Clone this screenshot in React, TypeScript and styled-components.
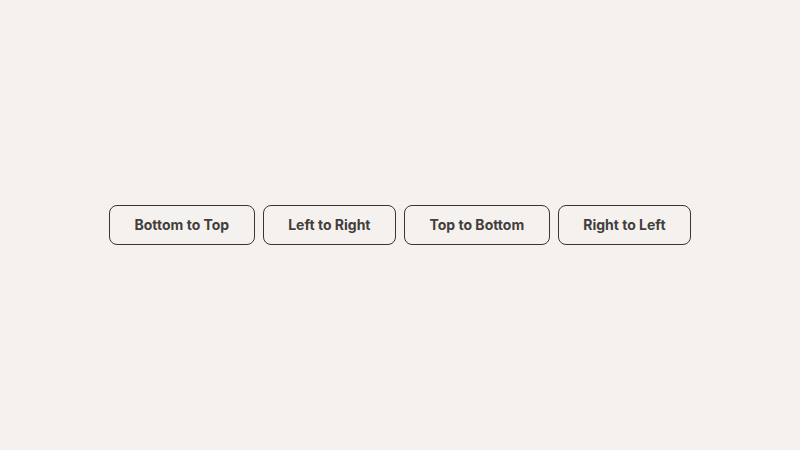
import styled, { createGlobalStyle } from "styled-components";

const GlobalStyle = createGlobalStyle`
  html, body {
    margin: 0;
    padding: 0;
    background: #f5f1ee;
  }
`;

const Page = styled.div`
  width: 100vw;
  height: 100vh;
  display: flex;
  justify-content: center;
  align-items: center;
  gap: 8px;
`;

const DirButton = styled.button`
  box-sizing: border-box;
  height: 40px;
  padding: 0 24.5px 1px;
  background: transparent;
  border: 1.6px solid #3a3533;
  border-radius: 8px;
  color: #433e3c;
  font-family: "Inter", "Liberation Sans", sans-serif;
  font-size: 14px;
  font-weight: 700;
  cursor: pointer;
`;

const labels = ["Bottom to Top", "Left to Right", "Top to Bottom", "Right to Left"];

export default function App() {
  return (
    <>
      <GlobalStyle />
      <Page>
        {labels.map((l) => (
          <DirButton key={l}>{l}</DirButton>
        ))}
      </Page>
    </>
  );
}
